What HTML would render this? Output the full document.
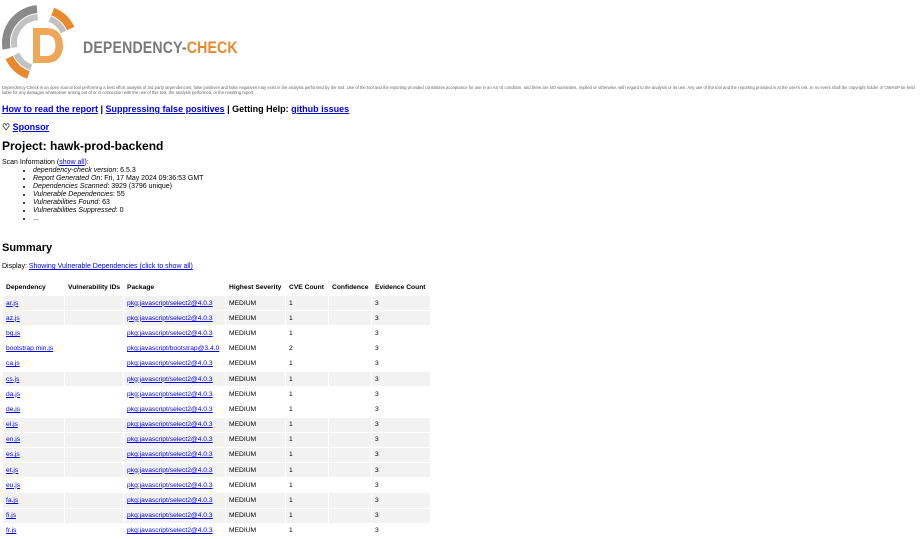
<!DOCTYPE html>
<html><head><meta charset="utf-8"><style>
body{margin:0;padding:0 2px;font-family:"Liberation Sans",Arial,sans-serif;font-size:7px;color:#000;background:#fff;width:917px;overflow:hidden}
a{color:#00e}
.logo{position:absolute;left:0;top:0}
.brand{position:absolute;left:83px;top:38px;font-size:17px;font-weight:bold;color:#7a7a7a;letter-spacing:0.2px;transform:scaleX(0.83);transform-origin:left}
.brand span{color:#e8892e}
.disc{position:absolute;left:2px;top:85px;font-size:4.2px;color:#666;line-height:5px;width:915px}
.links{position:absolute;left:2px;top:104px;font-size:9px;font-weight:bold}
.spons{position:absolute;left:2px;top:122px;font-size:9px;font-weight:bold}
h2{position:absolute;left:2px;top:139px;margin:0;font-size:12px}
.scan{position:absolute;left:2px;top:159px;font-size:7px;line-height:8px}
.scan ul{margin:0;padding-left:31px}
.scan li{list-style:disc}
h3{position:absolute;left:2px;top:242px;margin:0;font-size:11px}
.disp{position:absolute;left:2px;top:263px;font-size:7px}
table{position:absolute;left:2px;top:279px;border-spacing:1px;font-size:6.7px}
td,th{height:14.2px;padding:0 0 0 3px;text-align:left;white-space:nowrap}
th{font-weight:bold;height:15px}
tr.g td{background:#f2f2f2}
</style></head><body>
<svg class="logo" width="82" height="84" viewBox="0 0 82 84">
<g fill="none">
<path d="M6.5 48.9 A34 34 0 0 1 37 9.1" stroke="#8a8a8a" stroke-width="8"/>
<path d="M14.4 47.5 A26 26 0 0 1 37.7 17.1" stroke="#c2c2c2" stroke-width="6"/>
<path d="M52.7 11.5 A34 34 0 0 1 70.8 28.6" stroke="#e8892e" stroke-width="8"/>
<path d="M49.7 18.9 A26 26 0 0 1 63.6 32" stroke="#c2c2c2" stroke-width="6"/>
<path d="M9.2 57.4 A34 34 0 0 0 28.4 75" stroke="#e8892e" stroke-width="8"/>
<path d="M16.4 54 A26 26 0 0 0 31.1 67.4" stroke="#c2c2c2" stroke-width="6"/>
</g>
<path d="M33 28 H47 C57 28 63 35 63 45.5 C63 56 57 63 47 63 H33 Z M40 35 V56 H46.5 C52.5 56 55.5 52 55.5 45.5 C55.5 39 52.5 35 46.5 35 Z" fill="#eea659" fill-rule="evenodd"/>
</svg>
<div class="brand">DEPENDENCY-<span>CHECK</span></div>
<div class="disc">Dependency-Check is an open source tool performing a best effort analysis of 3rd party dependencies; false positives and false negatives may exist in the analysis performed by the tool. Use of the tool and the reporting provided constitutes acceptance for use in an AS IS condition, and there are NO warranties, implied or otherwise, with regard to the analysis or its use. Any use of the tool and the reporting provided is at the user's risk. In no event shall the copyright holder or OWASP be held liable for any damages whatsoever arising out of or in connection with the use of this tool, the analysis performed, or the resulting report.</div>
<div class="links"><a href="#">How to read the report</a> | <a href="#">Suppressing false positives</a> | Getting Help: <a href="#">github issues</a></div>
<div class="spons">♡ <a href="#">Sponsor</a></div>
<h2>Project: hawk-prod-backend</h2>
<div class="scan">Scan Information (<a href="#">show all</a>):
<ul>
<li><i>dependency-check version</i>: 6.5.3</li>
<li><i>Report Generated On</i>: Fri, 17 May 2024 09:36:53 GMT</li>
<li><i>Dependencies Scanned</i>: 3929 (3796 unique)</li>
<li><i>Vulnerable Dependencies</i>: 55</li>
<li><i>Vulnerabilities Found</i>: 63</li>
<li><i>Vulnerabilities Suppressed</i>: 0</li>
<li>...</li>
</ul></div>
<h3>Summary</h3>
<div class="disp">Display: <a href="#">Showing Vulnerable Dependencies (click to show all)</a></div>
<table>
<tr><th style="width:58px">Dependency</th><th style="width:55px">Vulnerability IDs</th><th style="width:98px">Package</th><th style="width:56px">Highest Severity</th><th style="width:39px">CVE Count</th><th style="width:39px">Confidence</th><th style="width:55px">Evidence Count</th></tr>
<tr class="g"><td><a href="#">ar.js</a></td><td></td><td><a href="#">pkg:javascript/select2@4.0.3</a></td><td>MEDIUM</td><td>1</td><td></td><td>3</td></tr>
<tr class="g"><td><a href="#">az.js</a></td><td></td><td><a href="#">pkg:javascript/select2@4.0.3</a></td><td>MEDIUM</td><td>1</td><td></td><td>3</td></tr>
<tr><td><a href="#">bg.js</a></td><td></td><td><a href="#">pkg:javascript/select2@4.0.3</a></td><td>MEDIUM</td><td>1</td><td></td><td>3</td></tr>
<tr><td><a href="#">bootstrap.min.js</a></td><td></td><td><a href="#">pkg:javascript/bootstrap@3.4.0</a></td><td>MEDIUM</td><td>2</td><td></td><td>3</td></tr>
<tr><td><a href="#">ca.js</a></td><td></td><td><a href="#">pkg:javascript/select2@4.0.3</a></td><td>MEDIUM</td><td>1</td><td></td><td>3</td></tr>
<tr class="g"><td><a href="#">cs.js</a></td><td></td><td><a href="#">pkg:javascript/select2@4.0.3</a></td><td>MEDIUM</td><td>1</td><td></td><td>3</td></tr>
<tr><td><a href="#">da.js</a></td><td></td><td><a href="#">pkg:javascript/select2@4.0.3</a></td><td>MEDIUM</td><td>1</td><td></td><td>3</td></tr>
<tr><td><a href="#">de.js</a></td><td></td><td><a href="#">pkg:javascript/select2@4.0.3</a></td><td>MEDIUM</td><td>1</td><td></td><td>3</td></tr>
<tr class="g"><td><a href="#">el.js</a></td><td></td><td><a href="#">pkg:javascript/select2@4.0.3</a></td><td>MEDIUM</td><td>1</td><td></td><td>3</td></tr>
<tr class="g"><td><a href="#">en.js</a></td><td></td><td><a href="#">pkg:javascript/select2@4.0.3</a></td><td>MEDIUM</td><td>1</td><td></td><td>3</td></tr>
<tr class="g"><td><a href="#">es.js</a></td><td></td><td><a href="#">pkg:javascript/select2@4.0.3</a></td><td>MEDIUM</td><td>1</td><td></td><td>3</td></tr>
<tr class="g"><td><a href="#">et.js</a></td><td></td><td><a href="#">pkg:javascript/select2@4.0.3</a></td><td>MEDIUM</td><td>1</td><td></td><td>3</td></tr>
<tr><td><a href="#">eu.js</a></td><td></td><td><a href="#">pkg:javascript/select2@4.0.3</a></td><td>MEDIUM</td><td>1</td><td></td><td>3</td></tr>
<tr class="g"><td><a href="#">fa.js</a></td><td></td><td><a href="#">pkg:javascript/select2@4.0.3</a></td><td>MEDIUM</td><td>1</td><td></td><td>3</td></tr>
<tr class="g"><td><a href="#">fi.js</a></td><td></td><td><a href="#">pkg:javascript/select2@4.0.3</a></td><td>MEDIUM</td><td>1</td><td></td><td>3</td></tr>
<tr><td><a href="#">fr.js</a></td><td></td><td><a href="#">pkg:javascript/select2@4.0.3</a></td><td>MEDIUM</td><td>1</td><td></td><td>3</td></tr>
</table>
</body></html>
